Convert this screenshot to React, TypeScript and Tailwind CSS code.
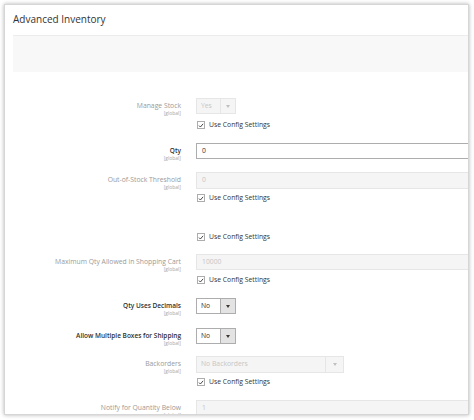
import React from "react";

const font = { fontFamily: '"Open Sans", "Noto Sans", sans-serif' };

function Label({ text, bold }: { text: string; bold?: boolean }) {
  return (
    <div className="h-full w-[177px] shrink-0 overflow-visible pt-[3px] pr-[1px] text-right">
      <div
        className={`whitespace-nowrap leading-[9px] ${
          bold ? "text-[6.5px] font-semibold text-[#303030]" : "text-[6.8px] text-[#9a9a9a]"
        }`}
      >
        {text}
      </div>
      <div className="text-[5px] leading-[7px] text-[#a8a8a8]">[global]</div>
    </div>
  );
}

function Arrow({ disabled }: { disabled?: boolean }) {
  return (
    <div
      className={`h-0 w-0 border-l-[2px] border-r-[2px] border-t-[3px] border-l-transparent border-r-transparent ${
        disabled ? "border-t-[#c0c0c0]" : "border-t-[#41362f]"
      }`}
    />
  );
}

function SmallSelect({ value, disabled }: { value: string; disabled?: boolean }) {
  return (
    <div
      className={`flex h-full w-[40px] border ${
        disabled ? "border-[#e6e6e6] bg-[#f5f5f5] text-[#c6c6c6]" : "border-[#adadad] bg-white text-[#333]"
      }`}
    >
      <div className="flex flex-1 items-center pl-[4px] text-[6.8px]">{value}</div>
      <div
        className={`flex w-[15px] items-center justify-center border-l ${
          disabled ? "border-[#e6e6e6] bg-[#f5f5f5]" : "border-[#adadad] bg-[#e3e3e3]"
        }`}
      >
        <Arrow disabled={disabled} />
      </div>
    </div>
  );
}

function Input({ value, disabled }: { value: string; disabled?: boolean }) {
  return (
    <div
      className={`flex h-full w-[300px] items-center border pl-[5px] text-[6.8px] ${
        disabled ? "border-[#e6e6e6] bg-[#f5f5f5] text-[#c6c6c6]" : "border-[#adadad] bg-white text-[#333]"
      }`}
    >
      {value}
    </div>
  );
}

function Check({ mt }: { mt: string }) {
  return (
    <div className={`flex h-[10px] items-center pl-[192px] ${mt}`}>
      <div className="flex h-[8px] w-[8px] items-center justify-center border border-[#adadad] bg-white">
        <svg width="7" height="7" viewBox="0 0 8 8">
          <path d="M1.3 4.1 L3.2 6 L6.8 1.8" fill="none" stroke="#333" strokeWidth="1.2" />
        </svg>
      </div>
      <span className="ml-[4px] whitespace-nowrap text-[6.8px] text-[#333]">Use Config Settings</span>
    </div>
  );
}

function Field({
  label,
  bold,
  mt,
  h,
  children,
}: {
  label: string;
  bold?: boolean;
  mt: string;
  h: string;
  children: React.ReactNode;
}) {
  return (
    <div className={`flex items-start ${mt} ${h}`}>
      <Label text={label} bold={bold} />
      <div className="ml-[14px] h-full shrink-0">{children}</div>
    </div>
  );
}

export default function App() {
  return (
    <div className="h-[420px] w-[474px] overflow-hidden bg-white pl-[4px] pt-[4px]" style={font}>
      <div className="h-[411px] w-[465px] overflow-hidden border border-[#d6d6d6] bg-white shadow-[0_0_4px_rgba(0,0,0,0.3)]">
        <div className="pl-[8px] pt-[6px] text-[10px] leading-[17px] text-[#333]">Advanced Inventory</div>
        <div className="ml-[8px] mt-[7px] h-[37px] border-t border-[#ececec] bg-[#f8f8f8]" />

        <Field label="Manage Stock" mt="mt-[26px]" h="h-[16px]">
          <SmallSelect value="Yes" disabled />
        </Field>
        <Check mt="mt-[6px]" />

        <Field label="Qty" bold mt="mt-[13px]" h="h-[16px]">
          <Input value="0" />
        </Field>

        <Field label="Out-of-Stock Threshold" mt="mt-[13px]" h="h-[17px]">
          <Input value="0" disabled />
        </Field>
        <Check mt="mt-[4px]" />

        <Check mt="mt-[29px]" />

        <Field label="Maximum Qty Allowed in Shopping Cart" mt="mt-[12px]" h="h-[16px]">
          <Input value="10000" disabled />
        </Field>
        <Check mt="mt-[5px]" />

        <Field label="Qty Uses Decimals" bold mt="mt-[13px]" h="h-[16px]">
          <SmallSelect value="No" />
        </Field>

        <Field label="Allow Multiple Boxes for Shipping" bold mt="mt-[14px]" h="h-[16px]">
          <SmallSelect value="No" />
        </Field>

        <Field label="Backorders" mt="mt-[12px]" h="h-[17px]">
          <div className="flex h-full w-[148px] border border-[#e6e6e6] bg-[#f5f5f5] text-[#c6c6c6]">
            <div className="flex flex-1 items-center pl-[4px] text-[6.8px]">No Backorders</div>
            <div className="flex w-[18px] items-center justify-center border-l border-[#e6e6e6]">
              <Arrow disabled />
            </div>
          </div>
        </Field>
        <Check mt="mt-[4px]" />

        <Field label="Notify for Quantity Below" mt="mt-[13px]" h="h-[17px]">
          <Input value="1" disabled />
        </Field>
      </div>
    </div>
  );
}
